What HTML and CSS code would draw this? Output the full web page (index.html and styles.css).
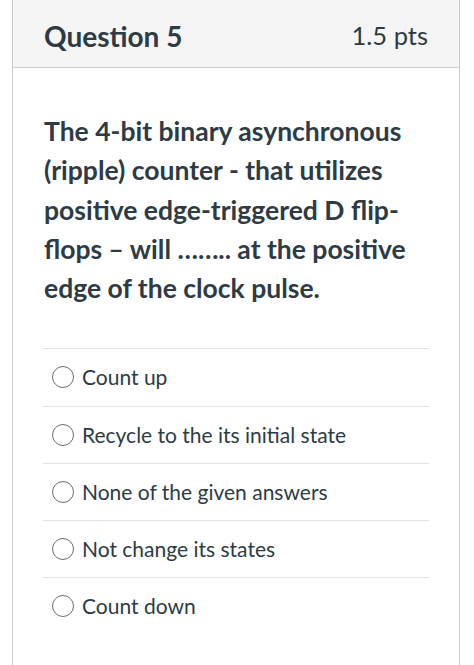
FILE: index.html
```html
<!DOCTYPE html>
<html lang="en">
<head>
<meta charset="utf-8">
<title>Question 5</title>
<link rel="stylesheet" href="styles.css">
</head>
<body>
<div class="card">
  <div class="card-header">
    <h2 class="title">Question 5</h2>
    <span class="points">1.5 pts</span>
  </div>
  <div class="card-body">
    <p class="question">The 4-bit binary asynchronous (ripple) counter - that utilizes positive edge-triggered D flip-flops – will …….. at the positive edge of the clock pulse.</p>
    <ul class="answers">
      <li class="answer"><span class="radio"></span><span class="label">Count up</span></li>
      <li class="answer"><span class="radio"></span><span class="label">Recycle to the its initial state</span></li>
      <li class="answer"><span class="radio"></span><span class="label">None of the given answers</span></li>
      <li class="answer"><span class="radio"></span><span class="label">Not change its states</span></li>
      <li class="answer"><span class="radio"></span><span class="label">Count down</span></li>
    </ul>
  </div>
</div>
</body>
</html>
```
FILE: styles.css
```css
html, body {
  margin: 0;
  padding: 0;
  background: #ffffff;
}
body {
  font-family: Lato, "Open Sans", sans-serif;
  color: #2d3b45;
  height: 665px;
  overflow: hidden;
}
.card {
  margin-left: 12px;
  width: 446px;
  min-height: 700px;
  border-left: 1px solid #c7cdd1;
  border-right: 1px solid #c7cdd1;
}
.card-header {
  height: 68px;
  box-sizing: border-box;
  background: #f5f5f5;
  border-bottom: 1px solid #c7cdd1;
  display: flex;
  align-items: center;
  justify-content: space-between;
  padding: 0 31px 0 31px;
}
.title {
  margin: 0;
  font-size: 28px;
  font-weight: 700;
  line-height: 1;
  padding-top: 4px;
}
.points {
  font-size: 25.5px;
  font-weight: 400;
  line-height: 1;
  padding-top: 4px;
}
.card-body {
  padding: 44px 30px 0 30px;
}
.question {
  margin: 0 0 0 1px;
  font-size: 26.5px;
  font-weight: 700;
  line-height: 39.25px;
}
.answers {
  list-style: none;
  margin: 40px 0 0 0;
  padding: 0;
}
.answer {
  height: 56.25px;
  border-top: 1px solid #e1e4e6;
  display: flex;
  align-items: center;
  padding-left: 9px;
}
.radio {
  width: 20px;
  height: 20px;
  border: 1.5px solid #6b6f72;
  border-radius: 50%;
  flex: none;
  margin-right: 8px;
}
.label {
  font-size: 21px;
  line-height: 1;
  padding-bottom: 1px;
}
```
